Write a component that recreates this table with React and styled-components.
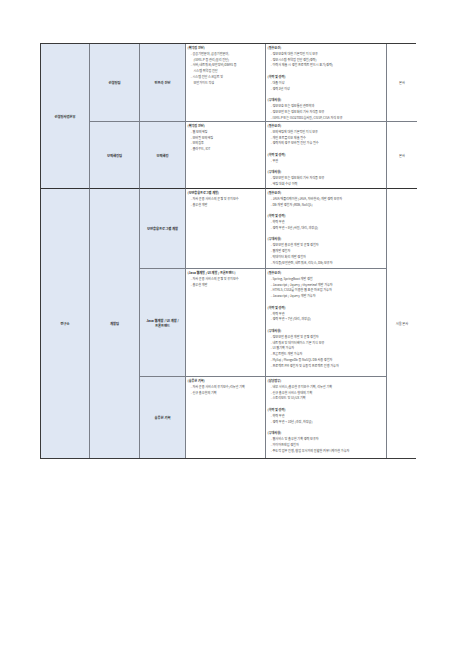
import React from 'react'
import styled, { createGlobalStyle } from 'styled-components'

const Global = createGlobalStyle`
  html, body { margin: 0; padding: 0; background: #fff; }
  body { font-family: "Noto Sans CJK KR", "Noto Sans", sans-serif; }
`

const Page = styled.div`
  width: 474px;
  height: 669px;
  background: #fff;
  padding: 43px 0 0 40px;
  box-sizing: border-box;
`

const Table = styled.div`
  display: grid;
  grid-template-columns: 49px 50px 46px 80px 121px 30px;
  grid-template-rows: 78px 67px 80px 108px 81px;
  width: 376px;
  border: 1px solid #3a3a3a;
  box-sizing: border-box;
`

const Cell = styled.div`
  grid-column: ${p => p.col};
  grid-row: ${p => p.row};
  box-sizing: border-box;
  border-right: ${p => (p.last ? 'none' : '1px solid #7a7f88')};
  border-bottom: ${p => (p.bottom === 'thick' ? '1.5px solid #333' : p.bottom === 'none' ? 'none' : '1px solid #7a7f88')};
  background: ${p => (p.label ? '#dfe7f3' : '#fff')};
  display: flex;
  align-items: ${p => (p.label || p.center ? 'center' : 'flex-start')};
  justify-content: ${p => (p.label || p.center ? 'center' : 'flex-start')};
  text-align: ${p => (p.label || p.center ? 'center' : 'left')};
  overflow: hidden;
`

const Label = styled.span`
  font-size: 3.3px;
  line-height: 5px;
  font-weight: 700;
  color: #1e1e1e;
  padding: 0 2px;
  white-space: pre-line;
`

const Plain = styled.span`
  font-size: 3.2px;
  color: #444;
`

const Body = styled.div`
  padding: 1px 1px 0 1.5px;
  font-size: 3.1px;
  line-height: 5.8px;
  color: #474747;
  width: 100%;
`

const Head = styled.div`
  font-weight: 700;
  color: #1e1e1e;
`

const Item = styled.div`
  padding-left: 6px;
  text-indent: -2.8px;
  white-space: pre-line;
`

const Gap = styled.div`
  height: 5.8px;
`

const Block = ({ sections }) => (
  <Body>
    {sections.map((s, i) => (
      <React.Fragment key={i}>
        {i > 0 && <Gap />}
        <Head>{s.title}</Head>
        {s.items.map((t, j) => (
          <Item key={j}>- {t}</Item>
        ))}
      </React.Fragment>
    ))}
  </Body>
)

const rows = [
  {
    row: 1,
    team: '컨설팅팀',
    job: '인프라 진단',
    duty: [{ title: '[취약점 진단]', items: ['공공기반분야, 금융기반분야,\n (ISMS-P 등 관리/물리 진단)', '서버/네트워크/보안장비/DBMS 등\n시스템 취약점 진단', '시스템 진단 스크립트 및\n보안가이드 작성'] }],
    req: [
      { title: '[필수요건]', items: ['정보보호에 대한 기본적인 지식 보유', '정보시스템 취약점 진단 경험(경력)', '이력서 제출 시 경험 프로젝트 반드시 표기(경력)'] },
      { title: '[학력 및 경력]', items: ['대졸 이상', '경력 3년 이상'] },
      { title: '[우대사항]', items: ['정보보호 또는 정보통신 관련학과', '정보보안 또는 정보처리 기사 자격증 보유', 'ISMS-P 또는 ISO27001심사원, CISSP, CISA 자격 보유'] }
    ]
  },
  {
    row: 2,
    team: '모의해킹팀',
    job: '모의해킹',
    bottom: 'thick',
    duty: [{ title: '[취약점 진단]', items: ['웹 모의해킹', '모바일 모의해킹', '모의침투', '클라우드, IOT'] }],
    req: [
      { title: '[필수요건]', items: ['모의해킹에 대한 기본적인 지식 보유', '개인 포트폴리오 제출 필수', '경력자의 경우 모바일 진단 가능 필수'] },
      { title: '[학력 및 경력]', items: ['무관'] },
      { title: '[우대사항]', items: ['정보보안 또는 정보처리 기사 자격증 보유', '해킹 대회 수상 이력'] }
    ]
  },
  {
    row: 3,
    job: '보안응용프로그램 개발',
    duty: [{ title: '[보안응용프로그램 개발]', items: ['자사 운용 서비스의 운영 및 유지보수', '솔루션 개발'] }],
    req: [
      { title: '[필수요건]', items: ['JAVA 애플리케이션 (JAVA, 자바한국) 개발 경력 보유자', 'DB 개발 경험자 (RDB, NoSQL)'] },
      { title: '[학력 및 경력]', items: ['학력 무관', '경력 무관 ~ 8년 (사원, 대리, 과장급)'] },
      { title: '[우대사항]', items: ['정보보안 솔루션 개발 및 운영 경험자', '웹개발 경험자', '빅데이터 처리 개발 경험자', '자격증(보안관련, 네트워크, 리눅스, DB) 보유자'] }
    ]
  },
  {
    row: 4,
    job: 'Java 웹개발 / UI 개발 /\n프론트엔드',
    duty: [{ title: '[Java 웹개발 / UI 개발 / 프론트엔드]', items: ['자사 운용 서비스의 운영 및 유지보수', '솔루션 개발'] }],
    req: [
      { title: '[필수요건]', items: ['Spring, SpringBoot 개발 경험', 'Javascript / Jquery / thymeleaf 개발 가능자', 'HTML5, CSS3를 이용한 웹 표준 마크업 가능자', 'Javascript / Jquery 개발 가능자'] },
      { title: '[학력 및 경력]', items: ['학력 무관', '경력 무관 ~ 7년 (대리, 과장급)'] },
      { title: '[우대사항]', items: ['정보보안 솔루션 개발 및 운영 경험자', '네트워크 및 데이터베이스 기본 지식 보유', 'UI 웹기획 가능자', '프론트엔드 개발 가능자', 'MySql / MongoDb 등 NoSQL DB 사용 경험자', '프로젝트 PM 경험자 및 능동적 프로젝트 진행 가능자'] }
    ]
  },
  {
    row: 5,
    job: '솔루션 기획',
    bottom: 'none',
    duty: [{ title: '[솔루션 기획]', items: ['자사 운용 서비스의 유지보수/리뉴얼 기획', '신규 솔루션의 기획'] }],
    req: [
      { title: '[담당업무]', items: ['내부 서비스/솔루션 유지보수 기획, 리뉴얼 기획', '신규 솔루션 서비스 형태의 기획', '스토리보드 및 UI/UX 기획'] },
      { title: '[학력 및 경력]', items: ['학력 무관', '경력 무관 ~ 10년 (과장, 차장급)'] },
      { title: '[우대사항]', items: ['웹서비스 및 솔루션 기획 경력 보유자', '와이어프레임 경험자', '주도적 업무 진행, 협업 부서와의 원활한 커뮤니케이션 가능자'] }
    ]
  }
]

export default function App() {
  return (
    <Page>
      <Global />
      <Table>
        <Cell label col="1" row="1 / 3" bottom="thick">
          <Label>컨설팅사업본부</Label>
        </Cell>
        <Cell label col="1" row="3 / 6" bottom="none">
          <Label>연구소</Label>
        </Cell>
        <Cell label col="2" row="3 / 6" bottom="none">
          <Label>개발팀</Label>
        </Cell>
        <Cell center last col="6" row="3 / 6" bottom="none">
          <Plain>서울 본사</Plain>
        </Cell>
        {rows.map(r => (
          <React.Fragment key={r.row}>
            {r.team && (
              <Cell label col="2" row={r.row} bottom={r.bottom}>
                <Label>{r.team}</Label>
              </Cell>
            )}
            <Cell label col="3" row={r.row} bottom={r.bottom}>
              <Label>{r.job}</Label>
            </Cell>
            <Cell col="4" row={r.row} bottom={r.bottom}>
              <Block sections={r.duty} />
            </Cell>
            <Cell col="5" row={r.row} bottom={r.bottom}>
              <Block sections={r.req} />
            </Cell>
            {r.row < 3 && (
              <Cell center last col="6" row={r.row} bottom={r.bottom}>
                <Plain>본사</Plain>
              </Cell>
            )}
          </React.Fragment>
        ))}
      </Table>
    </Page>
  )
}
